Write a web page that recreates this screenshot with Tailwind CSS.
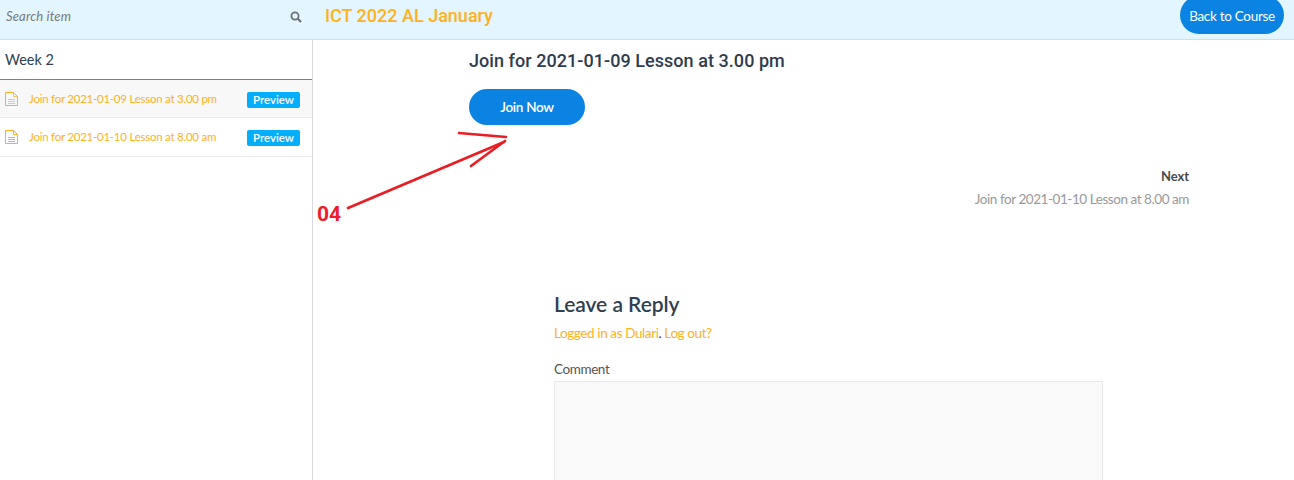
<!DOCTYPE html>
<html lang="en">
<head>
    <meta charset="UTF-8">
    <meta name="viewport" content="width=device-width, initial-scale=1.0">
    <title>ICT 2022 AL January</title>
    <script src="https://cdn.jsdelivr.net/npm/@tailwindcss/browser@4"></script>
</head>
<body class="h-[480px] overflow-hidden bg-white font-['Lato',sans-serif] text-[14px]">
    <!-- top bar -->
    <header class="flex h-10 border-b border-[#d5dde3] bg-[#e3f5fe]">
        <div class="flex h-[33px] w-[313px] shrink-0 items-center justify-between pl-[6px] pr-[11px]">
            <span class="text-[13px] tracking-[0.15px] italic text-[#77797b]">Search item</span>
            <svg class="h-[12px] w-[12px]" viewBox="0 0 12 12" fill="none" stroke="#6f7274">
                <circle cx="5" cy="5" r="3.6" stroke-width="1.8"/>
                <path d="M7.8 7.8 11 11" stroke-width="2.2"/>
            </svg>
        </div>
        <h1 class="ml-3 flex h-[31px] items-center font-['Roboto',sans-serif] text-[18px] font-medium text-[#ffb11b]">ICT 2022 AL January</h1>
        <a class="-mt-1 ml-auto mr-[10px] flex h-[38px] w-[104px] items-center justify-center rounded-full bg-[#0b83e2] pt-[2px] text-[13.5px] tracking-[-0.3px] text-white">Back to Course</a>
    </header>

    <div class="flex h-[440px]">
        <!-- sidebar -->
        <aside class="w-[313px] shrink-0 border-r border-[#d9d9d9]">
            <div class="flex h-10 items-center border-b border-[#1e9fe6] pl-[5px] text-[14.5px] text-[#2f3f52]">Week 2</div>
            <div class="flex h-[38px] items-center border-b border-[#ececec] bg-[#f8f8f8] pl-[5px] pr-3 text-[11.5px] tracking-[-0.25px] text-[#ffb11b]">
                <svg class="h-[14px] w-[13px] shrink-0" viewBox="0 0 13 14" fill="none" stroke="#ffb11b">
                    <path d="M.5.5h8l4 4v9H.5z"/>
                    <path d="M8.5.5v4h4M3 7.5h7M3 9.5h7M3 11.5h7" stroke-opacity=".7"/>
                </svg>
                <span class="ml-[11px]">Join for 2021-01-09 Lesson at 3.00 pm</span>
                <span class="ml-auto mt-[2px] flex h-4 w-[53px] items-center justify-center rounded-[2px] bg-[#03aefb] text-[11.5px] font-semibold tracking-normal text-white">Preview</span>
            </div>
            <div class="flex h-[39px] items-center border-b border-[#ececec] pl-[5px] pr-3 text-[11.5px] tracking-[-0.25px] text-[#ffb11b]">
                <svg class="h-[14px] w-[13px] shrink-0" viewBox="0 0 13 14" fill="none" stroke="#ffb11b">
                    <path d="M.5.5h8l4 4v9H.5z"/>
                    <path d="M8.5.5v4h4M3 7.5h7M3 9.5h7M3 11.5h7"/>
                </svg>
                <span class="ml-[11px]">Join for 2021-01-10 Lesson at 8.00 am</span>
                <span class="ml-auto mt-[2px] flex h-4 w-[53px] items-center justify-center rounded-[2px] bg-[#03aefb] text-[11.5px] font-semibold tracking-normal text-white">Preview</span>
            </div>
        </aside>

        <!-- lesson -->
        <main class="relative flex-1">
            <div class="pl-[156px] pr-[105px]">
                <h2 class="mt-[9px] font-['Roboto',sans-serif] text-[18px] leading-[24px] font-medium tracking-[0.05px] text-[#2f3b4e]">Join for 2021-01-09 Lesson at 3.00 pm</h2>
                <a class="mt-[16px] flex h-9 w-[116px] items-center justify-center rounded-full bg-[#0b83e2] pt-[1px] text-[13.5px] font-semibold tracking-[-0.3px] text-white">Join Now</a>
                <div class="mt-[41px] text-right">
                    <div class="text-[13px] font-bold leading-5 tracking-[-0.1px] text-[#4a4a4a]">Next</div>
                    <div class="mt-[3px] text-[13.5px] leading-5 tracking-[-0.44px] text-[#999]">Join for 2021-01-10 Lesson at 8.00 am</div>
                </div>
            </div>
            <section class="ml-[241px] mt-[82px] w-[549px]">
                <h3 class="text-[21px] leading-[26px] font-semibold tracking-[-0.05px] text-[#2f3f52]">Leave a Reply</h3>
                <p class="mt-[6px] text-[13.5px] leading-5 tracking-[-0.4px] text-[#444]"><a class="text-[#ffb11b]">Logged in as Dulari</a>. <a class="text-[#ffb11b]">Log out?</a></p>
                <label class="mt-[16px] block text-[13.5px] leading-5 tracking-[-0.4px] text-[#555]">Comment</label>
                <div class="mt-[2px] h-[99px] border border-b-0 border-[#e8e8e8] bg-[#f9f9f9]"></div>
            </section>

            <!-- hand drawn annotation -->
            <svg class="absolute left-0 top-0" width="220" height="200" fill="none" stroke="#ea1c24" stroke-width="2.7" stroke-linecap="round">
                <path d="M35 168 191 102M146 93 193 97M158 126 192 101"/>
            </svg>
            <span class="absolute left-[4px] top-[161px] font-['Roboto',sans-serif] text-[21px] leading-[26px] font-bold text-[#ee1c2e]">04</span>
        </main>
    </div>
</body>
</html>
